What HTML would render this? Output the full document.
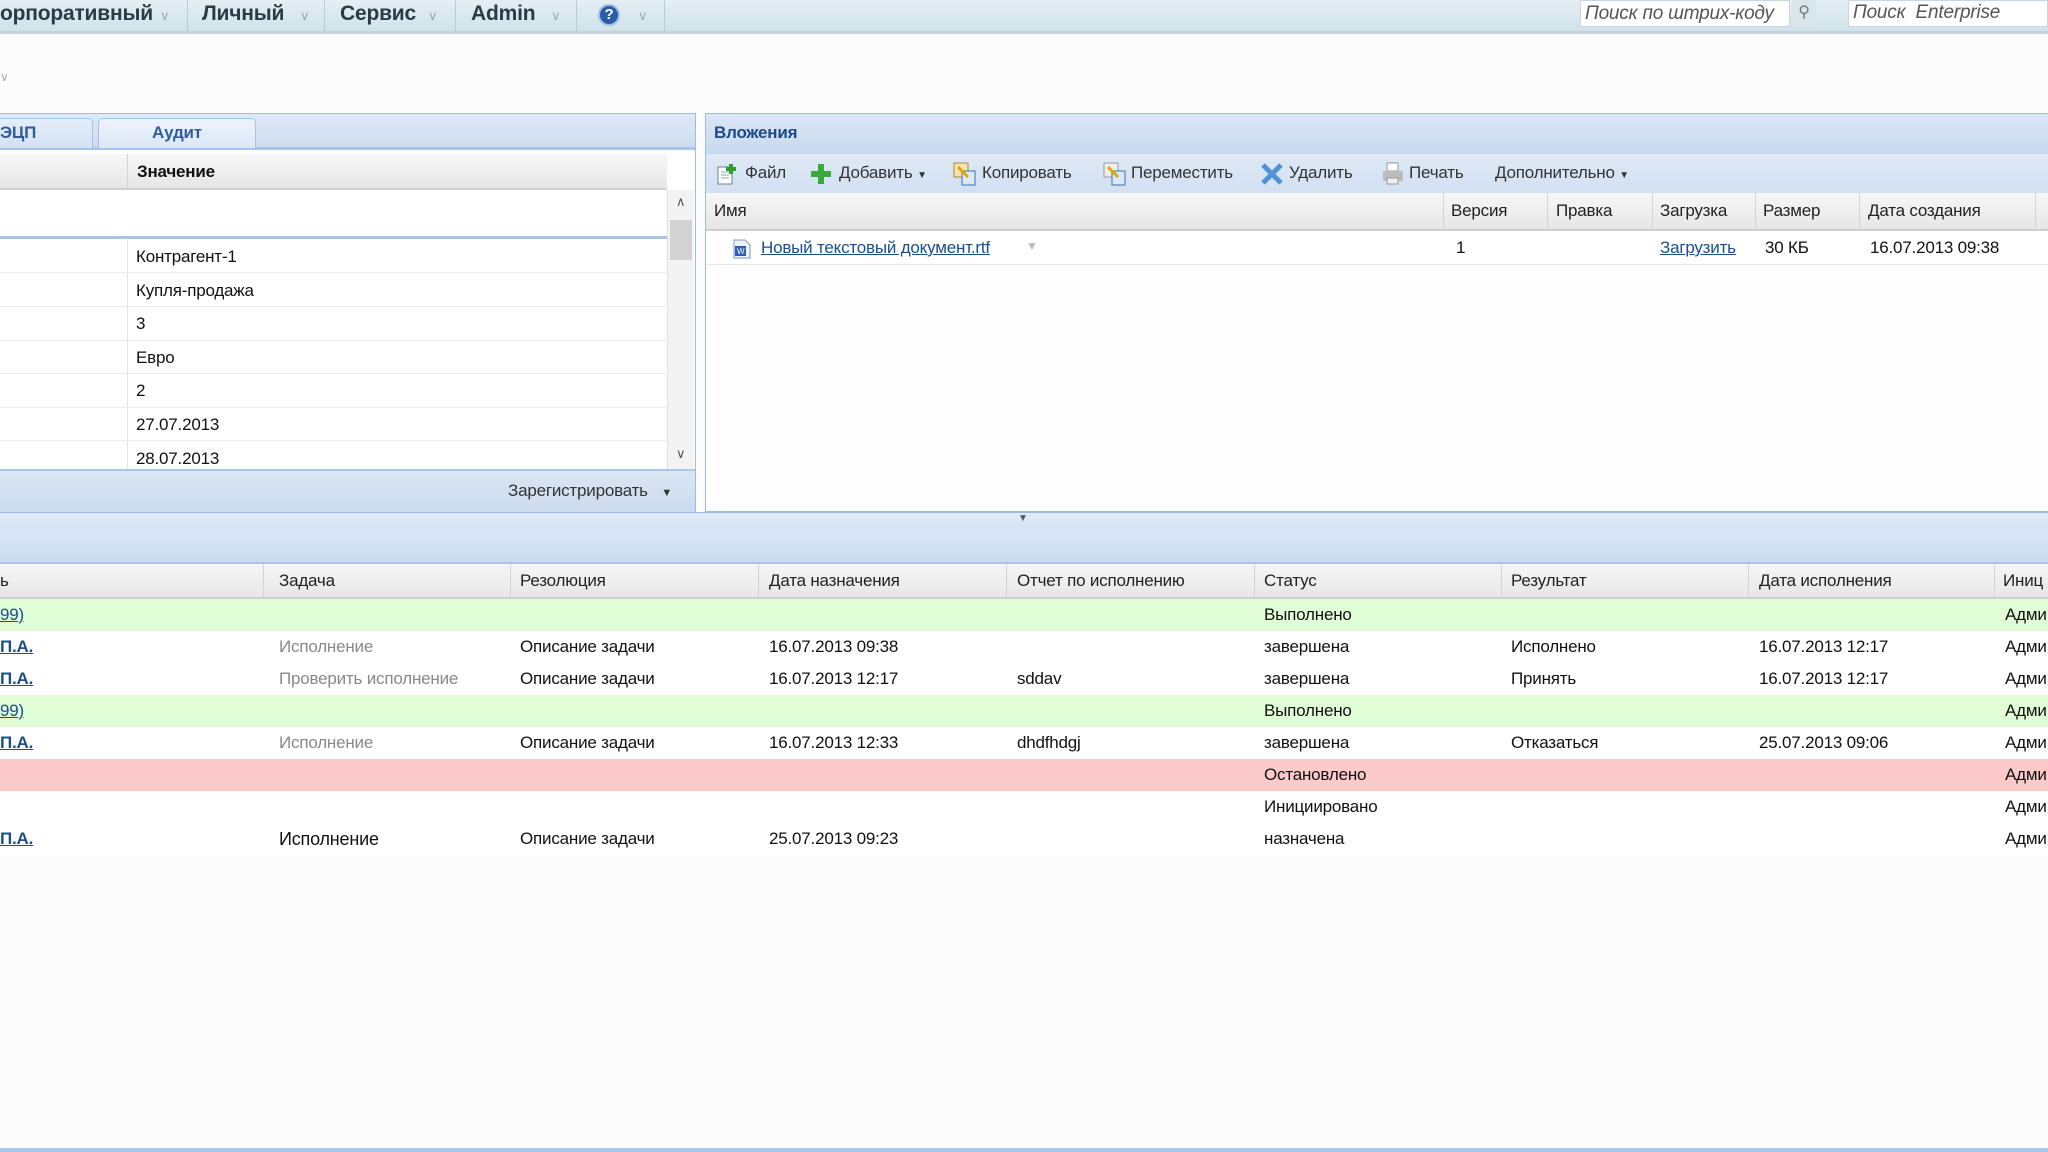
<!DOCTYPE html>
<html><head><meta charset="utf-8">
<style>
*{margin:0;padding:0;box-sizing:border-box}
body{width:2048px;height:1152px;overflow:hidden;background:#fcfcfc;font-family:"Liberation Sans",sans-serif;font-size:16px;color:#111;position:relative;letter-spacing:-0.2px}
.a{position:absolute;white-space:nowrap}
.menu{left:0;top:0;width:2048px;height:34px;background:linear-gradient(#e4eff4,#cfe2ea);border-bottom:3px solid #c4d3da}
.mi{font-weight:bold;font-size:21px;color:#2b3a44;top:2px}
.car{color:#9aaab2;font-size:13px;top:8px}
.sep{top:0;width:1px;height:32px;background:#b9cbd4}
.hdr{background:linear-gradient(#f7f7f7,#e6e6e6);border-bottom:2px solid #cfcfcf}
.vl{position:absolute;top:0;width:1px;background:#d3d3d3}
.row{position:absolute;left:0;height:33px;border-bottom:1px solid #ececec}
.lnk{color:#1b4f8a;text-decoration:underline}
</style></head><body>

<div class="a menu">
 <div class="a mi" style="left:0">орпоративный</div><div class="a car" style="left:160px">∨</div><div class="a sep" style="left:187px"></div>
 <div class="a mi" style="left:202px">Личный</div><div class="a car" style="left:300px">∨</div><div class="a sep" style="left:324px"></div>
 <div class="a mi" style="left:340px">Сервис</div><div class="a car" style="left:428px">∨</div><div class="a sep" style="left:455px"></div>
 <div class="a mi" style="left:471px">Admin</div><div class="a car" style="left:551px">∨</div><div class="a sep" style="left:576px"></div>
 <div class="a" style="left:598px;top:4px;width:22px;height:22px;border-radius:50%;background:#2a5ca8;border:2px solid #9ec0e6;color:#fff;font-weight:bold;font-size:15px;text-align:center;line-height:18px">?</div>
 <div class="a car" style="left:638px">∨</div><div class="a sep" style="left:664px"></div>
 <div class="a" style="left:1580px;top:0;width:210px;height:27px;background:#fff;border:1px solid #c9d6dc;font-style:italic;color:#555;font-size:19px;padding-left:4px;line-height:26px">Поиск по штрих-коду</div>
 <div class="a" style="left:1792px;top:0;width:24px;height:27px;background:#d9e6ec;color:#777;font-size:16px;text-align:center;line-height:26px">⚲</div>
 <div class="a" style="left:1848px;top:0;width:200px;height:27px;background:#fff;border:1px solid #c9d6dc;font-style:italic;color:#555;font-size:19px;padding-left:4px;line-height:24px">Поиск&nbsp; Enterprise</div>
</div>
<div class="a" style="left:0;top:70px;color:#aaa;font-size:12px">∨</div>

<!-- left panel -->
<div class="a" style="left:0;top:113px;width:696px;height:399px;border:1px solid #99bbe8;border-left:none;background:#fff">
 <div class="a" style="left:0;top:0;width:695px;height:36px;background:linear-gradient(#dfe9f6,#cddcef);border-bottom:3px solid #a9c5ea"></div>
 <div class="a" style="left:0;top:4px;width:93px;height:31px;background:linear-gradient(#e6eef9,#d3e1f3);border:1px solid #a6c2e6;border-left:none;border-radius:0 5px 0 0;color:#2f5d9c;font-weight:bold;font-size:17px;line-height:28px">ЭЦП</div>
 <div class="a" style="left:98px;top:4px;width:158px;height:31px;background:linear-gradient(#eef4fc,#dbe7f7);border:1px solid #a6c2e6;border-radius:5px 5px 0 0;color:#2f5d9c;font-weight:bold;font-size:17px;line-height:28px;text-align:center">Аудит</div>
 <div class="a hdr" style="left:0;top:40px;width:667px;height:36px">
  <div class="vl" style="left:127px;height:36px"></div>
  <div class="a" style="left:137px;top:8px;font-weight:bold;font-size:17px">Значение</div>
 </div>
 <div class="a" style="left:0;top:122px;width:667px;height:3px;background:#a9c5ea"></div>
 <div class="vl" style="left:127px;top:125px;height:230px;background:#e3e3e3"></div>
 <div class="a" style="left:136px;top:126px;line-height:33.6px;font-size:17px">Контрагент-1<br>Купля-продажа<br>3<br>Евро<br>2<br>27.07.2013<br>28.07.2013</div>
 <div class="a" style="left:0;top:158px;width:667px;height:1px;background:#ececec;box-shadow:0 34px 0 #ececec,0 68px 0 #ececec,0 101px 0 #ececec,0 135px 0 #ececec,0 168px 0 #ececec,0 202px 0 #ececec"></div>
 <div class="a" style="left:667px;top:76px;width:27px;height:279px;background:#f3f3f3;border-left:1px solid #e0e0e0">
  <div class="a" style="left:8px;top:4px;color:#555;font-size:13px">∧</div>
  <div class="a" style="left:2px;top:30px;width:22px;height:40px;background:#d2d2d2"></div>
  <div class="a" style="left:8px;top:256px;color:#555;font-size:13px">∨</div>
 </div>
 <div class="a" style="left:0;top:355px;width:695px;height:43px;background:linear-gradient(#dbe6f4,#cbdaee);border-top:2px solid #a9c5ea">
  <div class="a" style="left:508px;top:10px;color:#333;font-size:17px">Зарегистрировать&nbsp;&nbsp; <span style="font-size:11px">▼</span></div>
 </div>
</div>

<!-- right panel -->
<div class="a" style="left:705px;top:113px;width:1343px;height:399px;border:1px solid #99bbe8;border-right:none;background:#fdfdfd">
 <div class="a" style="left:0;top:0;width:1343px;height:40px;background:linear-gradient(#dbe6f4,#c8d9ef)">
  <div class="a" style="left:8px;top:9px;font-weight:bold;color:#1d4a86;font-size:17px">Вложения</div>
 </div>
 <div class="a" style="left:0;top:40px;width:1343px;height:39px;background:linear-gradient(#dfe9f6,#d2e0f2)">
  <svg class="a" style="left:10px;top:8px" width="24" height="24"><rect x="2" y="5" width="14" height="17" fill="#fff" stroke="#6a7f99"/><path d="M5 10h8M5 13h8M5 16h8" stroke="#8aa"/><path d="M15 2v10M10 7h10" stroke="#2d9e2d" stroke-width="4"/></svg>
  <div class="a" style="left:39px;top:9px;font-size:17px;color:#333">Файл</div>
  <svg class="a" style="left:103px;top:8px" width="24" height="24"><path d="M12 2v20M2 12h20" stroke="#3aa83a" stroke-width="6"/></svg>
  <div class="a" style="left:133px;top:9px;font-size:17px;color:#333">Добавить <span style="font-size:10px">▼</span></div>
  <svg class="a" style="left:246px;top:7px" width="26" height="26"><rect x="2" y="2" width="14" height="14" fill="#f3e4b0" stroke="#a58a3a"/><rect x="10" y="10" width="13" height="14" fill="#dbeafb" stroke="#3b6fb0"/><path d="M6 6l10 10" stroke="#e0a800" stroke-width="3"/></svg>
  <div class="a" style="left:276px;top:9px;font-size:17px;color:#333">Копировать</div>
  <svg class="a" style="left:396px;top:7px" width="26" height="26"><rect x="2" y="2" width="14" height="14" fill="#eee" stroke="#999"/><rect x="10" y="10" width="13" height="14" fill="#dbeafb" stroke="#3b6fb0"/><path d="M6 6l10 10" stroke="#e0a800" stroke-width="3"/></svg>
  <div class="a" style="left:425px;top:9px;font-size:17px;color:#333">Переместить</div>
  <svg class="a" style="left:553px;top:7px" width="26" height="26"><path d="M4 4l18 18M22 4L4 22" stroke="#4f93d6" stroke-width="5"/></svg>
  <div class="a" style="left:583px;top:9px;font-size:17px;color:#333">Удалить</div>
  <svg class="a" style="left:675px;top:7px" width="24" height="26"><rect x="6" y="2" width="11" height="8" fill="#fff" stroke="#999"/><rect x="2" y="10" width="20" height="10" rx="2" fill="#bbb"/><rect x="6" y="17" width="11" height="6" fill="#eee" stroke="#999"/></svg>
  <div class="a" style="left:703px;top:9px;font-size:17px;color:#333">Печать</div>
  <div class="a" style="left:789px;top:9px;font-size:17px;color:#333">Дополнительно <span style="font-size:10px">▼</span></div>
 </div>
 <div class="a hdr" style="left:0;top:79px;width:1343px;height:38px;font-size:17px;color:#222">
  <div class="a" style="left:8px;top:8px">Имя</div>
  <div class="vl" style="left:737px;height:38px"></div><div class="a" style="left:745px;top:8px">Версия</div>
  <div class="vl" style="left:841px;height:38px"></div><div class="a" style="left:850px;top:8px">Правка</div>
  <div class="vl" style="left:946px;height:38px"></div><div class="a" style="left:954px;top:8px">Загрузка</div>
  <div class="vl" style="left:1049px;height:38px"></div><div class="a" style="left:1057px;top:8px">Размер</div>
  <div class="vl" style="left:1153px;height:38px"></div><div class="a" style="left:1162px;top:8px">Дата создания</div>
  <div class="vl" style="left:1329px;height:38px"></div>
 </div>
 <div class="a" style="left:0;top:117px;width:1343px;height:34px;background:#fff;border-bottom:1px solid #e6e6e6;font-size:17px">
  <svg class="a" style="left:26px;top:7px" width="20" height="22"><path d="M2 2h11l5 5v13H2z" fill="#eef3fb" stroke="#7e98c4"/><rect x="3" y="8" width="11" height="10" fill="#2f5fb0"/><text x="5" y="16" font-size="8" fill="#fff" font-family="Liberation Sans">W</text></svg>
  <div class="a lnk" style="left:55px;top:7px">Новый текстовый документ.rtf</div>
  <div class="a" style="left:320px;top:8px;color:#bbb;font-size:12px">▼</div>
  <div class="a" style="left:750px;top:7px">1</div>
  <div class="a lnk" style="left:954px;top:7px">Загрузить</div>
  <div class="a" style="left:1059px;top:7px">30 КБ</div>
  <div class="a" style="left:1164px;top:7px">16.07.2013 09:38</div>
 </div>
</div>

<!-- splitter & bottom panel header -->
<div class="a" style="left:0;top:512px;width:2048px;height:17px;background:linear-gradient(#e1ebf7,#d5e3f3);border-top:1px solid #99bbe8"><div class="a" style="left:1018px;top:0;font-size:10px;color:#556">▼</div></div>
<div class="a" style="left:0;top:529px;width:2048px;height:35px;background:linear-gradient(#dbe7f5,#cadbf0);border-bottom:2px solid #a9c5ea"></div>
<div class="a hdr" style="left:0;top:564px;width:2048px;height:35px;font-size:17px;color:#222">
 <div class="a" style="left:0;top:7px">ь</div>
 <div class="vl" style="left:263px;height:35px"></div><div class="a" style="left:279px;top:7px">Задача</div>
 <div class="vl" style="left:510px;height:35px"></div><div class="a" style="left:520px;top:7px">Резолюция</div>
 <div class="vl" style="left:758px;height:35px"></div><div class="a" style="left:769px;top:7px">Дата назначения</div>
 <div class="vl" style="left:1006px;height:35px"></div><div class="a" style="left:1017px;top:7px">Отчет по исполнению</div>
 <div class="vl" style="left:1254px;height:35px"></div><div class="a" style="left:1264px;top:7px">Статус</div>
 <div class="vl" style="left:1501px;height:35px"></div><div class="a" style="left:1511px;top:7px">Результат</div>
 <div class="vl" style="left:1748px;height:35px"></div><div class="a" style="left:1759px;top:7px">Дата исполнения</div>
 <div class="vl" style="left:1994px;height:35px"></div><div class="a" style="left:2003px;top:7px">Иниц</div>
</div>

<div class="a" style="left:0;top:599px;width:2048px;font-size:17px">
 <div class="row" style="top:0;width:2048px;background:#e0fdd6;border:none"><span class="a lnk" style="left:0;top:6px">99)</span><span class="a" style="left:1264px;top:6px">Выполнено</span><span class="a" style="left:2005px;top:6px">Адми</span></div>
 <div class="row" style="top:32px;width:2048px;border:none;background:#fff"><span class="a lnk" style="left:0;top:6px;font-weight:bold">П.А.</span><span class="a" style="left:279px;top:6px;color:#888">Исполнение</span><span class="a" style="left:520px;top:6px">Описание задачи</span><span class="a" style="left:769px;top:6px">16.07.2013 09:38</span><span class="a" style="left:1264px;top:6px">завершена</span><span class="a" style="left:1511px;top:6px">Исполнено</span><span class="a" style="left:1759px;top:6px">16.07.2013 12:17</span><span class="a" style="left:2005px;top:6px">Адми</span></div>
 <div class="row" style="top:64px;width:2048px;border:none;background:#fff"><span class="a lnk" style="left:0;top:6px;font-weight:bold">П.А.</span><span class="a" style="left:279px;top:6px;color:#888">Проверить исполнение</span><span class="a" style="left:520px;top:6px">Описание задачи</span><span class="a" style="left:769px;top:6px">16.07.2013 12:17</span><span class="a" style="left:1017px;top:6px">sddav</span><span class="a" style="left:1264px;top:6px">завершена</span><span class="a" style="left:1511px;top:6px">Принять</span><span class="a" style="left:1759px;top:6px">16.07.2013 12:17</span><span class="a" style="left:2005px;top:6px">Адми</span></div>
 <div class="row" style="top:96px;width:2048px;background:#e0fdd6;border:none"><span class="a lnk" style="left:0;top:6px">99)</span><span class="a" style="left:1264px;top:6px">Выполнено</span><span class="a" style="left:2005px;top:6px">Адми</span></div>
 <div class="row" style="top:128px;width:2048px;border:none;background:#fff"><span class="a lnk" style="left:0;top:6px;font-weight:bold">П.А.</span><span class="a" style="left:279px;top:6px;color:#888">Исполнение</span><span class="a" style="left:520px;top:6px">Описание задачи</span><span class="a" style="left:769px;top:6px">16.07.2013 12:33</span><span class="a" style="left:1017px;top:6px">dhdfhdgj</span><span class="a" style="left:1264px;top:6px">завершена</span><span class="a" style="left:1511px;top:6px">Отказаться</span><span class="a" style="left:1759px;top:6px">25.07.2013 09:06</span><span class="a" style="left:2005px;top:6px">Адми</span></div>
 <div class="row" style="top:160px;width:2048px;background:#fdcaca;border:none"><span class="a" style="left:1264px;top:6px">Остановлено</span><span class="a" style="left:2005px;top:6px">Адми</span></div>
 <div class="row" style="top:192px;width:2048px;border:none;background:#fff"><span class="a" style="left:1264px;top:6px">Инициировано</span><span class="a" style="left:2005px;top:6px">Адми</span></div>
 <div class="row" style="top:224px;width:2048px;border:none;background:#fff"><span class="a lnk" style="left:0;top:6px;font-weight:bold">П.А.</span><span class="a" style="left:279px;top:6px;font-size:18px">Исполнение</span><span class="a" style="left:520px;top:6px">Описание задачи</span><span class="a" style="left:769px;top:6px">25.07.2013 09:23</span><span class="a" style="left:1264px;top:6px">назначена</span><span class="a" style="left:2005px;top:6px">Адми</span></div>
</div>

<div class="a" style="left:0;top:1148px;width:2048px;height:4px;background:#a9c5ea"></div>
</body></html>
